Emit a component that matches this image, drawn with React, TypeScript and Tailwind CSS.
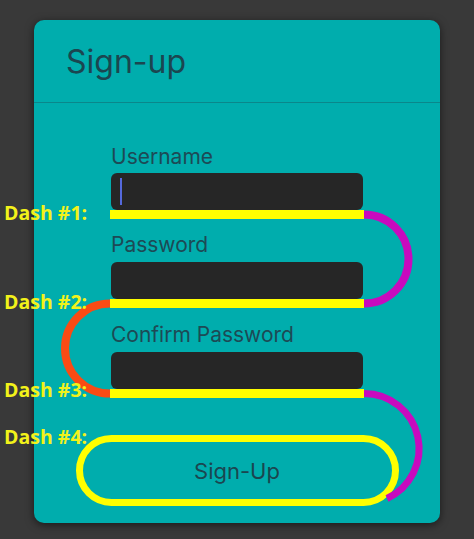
import React from "react";

const labelCls =
  "text-[21px] leading-[25px] text-[#1d4a55] font-['Inter',sans-serif]";
const inputCls = "h-[37px] rounded-[6px] bg-[#262626] flex items-center";
const barCls = "h-[9px] bg-[#ffff00] -mx-px";
const dashCls =
  "absolute left-[4px] text-[19.5px] leading-[20px] font-bold text-[#f2f21a] font-['Open_Sans',sans-serif] whitespace-nowrap";

export default function App() {
  return (
    <div className="relative w-[474px] h-[539px] bg-[#393939] overflow-hidden">
      <div className="pt-[20px] pl-[34px]">
        <div className="w-[406px] rounded-[10px] bg-[#00adad] shadow-[0_2px_8px_rgba(0,0,0,0.55)] flex flex-col">
          <div className="h-[83px] flex items-center pl-[32px] border-b border-[#0a878b]">
            <span className="text-[32px] leading-[39px] text-[#1b4650] font-['Inter',sans-serif]">
              Sign-up
            </span>
          </div>
          <div className="flex flex-col items-center pt-[41px] pb-[17px]">
            <div className="w-[252px] flex flex-col">
              <div className={labelCls + " mb-[4px]"}>Username</div>
              <div className={inputCls}>
                <div className="ml-[9px] w-[2px] h-[27px] bg-[#5569dc]" />
              </div>
              <div className={barCls} />
              <div className={labelCls + " mt-[13px] mb-[5px]"}>Password</div>
              <div className={inputCls} />
              <div className={barCls} />
              <div className={labelCls + " mt-[14px] mb-[5px]"}>
                Confirm Password
              </div>
              <div className={inputCls} />
              <div className={barCls} />
            </div>
            <div className="mt-[37px] w-[323px] h-[71px] rounded-full border-[7px] border-[#ffff00] flex items-center justify-center">
              <span className="text-[22px] leading-[28px] text-[#1b4650] font-['Inter',sans-serif]">
                Sign-Up
              </span>
            </div>
          </div>
        </div>
      </div>

      <svg
        className="absolute left-0 top-0 pointer-events-none"
        width="474"
        height="539"
        viewBox="0 0 474 539"
        fill="none"
      >
        <path
          d="M 364 214.5 A 44.5 44.5 0 0 1 364 303.5"
          stroke="#c80abe"
          strokeWidth="8"
        />
        <path
          d="M 110 303.5 A 45 45 0 0 0 110 393.5"
          stroke="#fa4b14"
          strokeWidth="8"
        />
        <path
          d="M 364 393.5 A 55 55 0 0 1 387 498.5"
          stroke="#c80abe"
          strokeWidth="7"
        />
      </svg>

      <div className={dashCls + " top-[203px]"}>Dash #1:</div>
      <div className={dashCls + " top-[292px]"}>Dash #2:</div>
      <div className={dashCls + " top-[380px]"}>Dash #3:</div>
      <div className={dashCls + " top-[427px]"}>Dash #4:</div>
    </div>
  );
}
